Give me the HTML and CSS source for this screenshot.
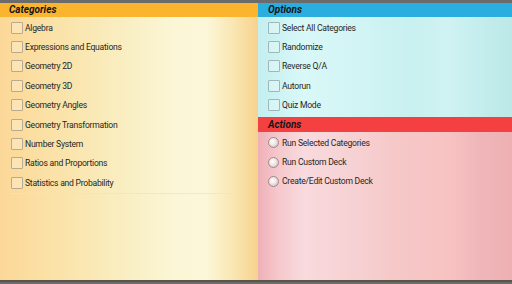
FILE: index.html
```html
<!DOCTYPE html>
<html lang="en">
    <head>
        <meta charset="utf-8" />
        <title>Quiz settings</title>
        <link rel="stylesheet" href="styles.css">
    </head>

    <body>
        <div class="ecran">
            <section class="panneau categories">
                <h2 class="entete entete-orange">Categories</h2>
                <ul class="liste">
                    <li><span class="case"></span>Algebra</li>
                    <li><span class="case"></span>Expressions and Equations</li>
                    <li><span class="case"></span>Geometry 2D</li>
                    <li><span class="case"></span>Geometry 3D</li>
                    <li><span class="case"></span>Geometry Angles</li>
                    <li><span class="case"></span>Geometry Transformation</li>
                    <li><span class="case"></span>Number System</li>
                    <li><span class="case"></span>Ratios and Proportions</li>
                    <li><span class="case"></span>Statistics and Probability</li>
                </ul>
                <div class="separateur"></div>
            </section>

            <div class="colonne">
                <section class="panneau options">
                    <h2 class="entete entete-bleu">Options</h2>
                    <ul class="liste">
                        <li><span class="case"></span>Select All Categories</li>
                        <li><span class="case"></span>Randomize</li>
                        <li><span class="case"></span>Reverse Q/A</li>
                        <li><span class="case"></span>Autorun</li>
                        <li><span class="case"></span>Quiz Mode</li>
                    </ul>
                </section>

                <section class="panneau actions">
                    <h2 class="entete entete-rouge">Actions</h2>
                    <ul class="liste">
                        <li><span class="radio"></span>Run Selected Categories</li>
                        <li><span class="radio"></span>Run Custom Deck</li>
                        <li><span class="radio"></span>Create/Edit Custom Deck</li>
                    </ul>
                </section>
            </div>
        </div>
    </body>
</html>
```

FILE: styles.css
```css
/* Normalisation
=============================================== */
* {
    margin: 0;
    padding: 0;
    box-sizing: border-box;
}

html, body {
    width: 512px;
    height: 284px;
    overflow: hidden;
}

body {
    font-family: Roboto, "Noto Sans", sans-serif;
    font-size: 8.6px;
    letter-spacing: -0.25px;
    color: #262626;
    background: #6b6b6b;
    padding-top: 3px;
}

/* Ecran principal : deux colonnes */
.ecran {
    height: 279px;
    display: flex;
    border-bottom: 2px solid #5a5544;
}

.panneau {
    display: flex;
    flex-direction: column;
}

/* Colonne de gauche */
.categories {
    width: 258px;
    background: linear-gradient(to right,
        #fbd898 0%, #fbdfa2 14%, #fae6b0 30%, #f9efc4 50%,
        #fbf6d6 68%, #fcf7d8 80%, #f9e7b4 90%, #f7d28e 100%);
}

.colonne {
    flex: 1 1 0;
    display: flex;
    flex-direction: column;
}

.options {
    height: 114px;
    background: linear-gradient(to right,
        #c4eef0 0%, #d9f8f8 18%, #d2f4f4 40%, #c9f0f0 60%,
        #d0f2f2 75%, #c2ecec 90%, #bde8e8 100%);
}

.actions {
    flex: 1 1 0;
    background: linear-gradient(to right,
        #efb0b8 0%, #f5c8cc 8%, #f9dade 18%, #f6d0d2 40%,
        #f6c8c8 55%, #f8c2c2 75%, #efb6ba 88%, #eeb0b2 100%);
}

/* Bandeaux de titre */
.entete {
    height: 14px;
    padding-left: 9px;
    font-size: 10px;
    font-weight: bold;
    font-style: italic;
    letter-spacing: 0;
    line-height: 14px;
    color: #151515;
}

.entete-orange {
    background: #fbb42e;
}

.entete-bleu {
    background: #2aaee0;
    padding-left: 10px;
}

.entete-rouge {
    height: 15px;
    line-height: 15px;
    background: #f44040;
    padding-left: 10px;
}

/* Listes */
.liste {
    list-style: none;
    padding-top: 1px;
}

.liste li {
    height: 19.4px;
    display: flex;
    align-items: center;
    padding-left: 11px;
}

.options .liste li,
.actions .liste li {
    padding-left: 10px;
}

.case {
    width: 12px;
    height: 12px;
    margin-right: 2px;
    border: 1px solid #b8aa90;
    border-radius: 1px;
    background: rgba(255, 255, 255, 0.25);
}

.options .case {
    border-color: #9cb8b8;
}

.radio {
    width: 11px;
    height: 11px;
    margin-right: 3px;
    border: 1px solid #a08888;
    border-radius: 50%;
    background: radial-gradient(circle at 40% 40%, #ffffff 0%, #efe4e4 45%, #c8b0b0 100%);
}

.separateur {
    margin: 0 14px 0 10px;
    height: 1px;
    background: rgba(255, 255, 255, 0.7);
    border-bottom: 1px solid rgba(220, 190, 130, 0.35);
}
```
